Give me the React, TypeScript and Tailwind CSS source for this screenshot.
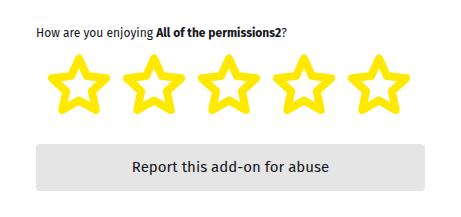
import React from "react";

function Star() {
  const cx = 32;
  const cy = 34;
  const R = 28.5;
  const r = 13.5;
  const pts: string[] = [];
  for (let i = 0; i < 10; i++) {
    const a = ((-90 + i * 36) * Math.PI) / 180;
    const rad = i % 2 === 0 ? R : r;
    pts.push(`${(cx + rad * Math.cos(a)).toFixed(2)},${(cy + rad * Math.sin(a)).toFixed(2)}`);
  }
  return (
    <svg width="64" height="64" viewBox="0 0 64 64" className="shrink-0">
      <polygon
        points={pts.join(" ")}
        fill="none"
        stroke="#ffe900"
        strokeWidth="8"
        strokeLinejoin="round"
      />
    </svg>
  );
}

export default function App() {
  return (
    <div className="w-[461px] h-[217px] bg-white pl-9 pt-[25px] text-[#15141a]" style={{ fontFamily: '"Fira Sans", "Open Sans", "Noto Sans", sans-serif' }}>
      <p className="text-[12px] leading-4">
        How are you enjoying <span className="font-bold">All of the permissions2</span>?
      </p>
      <div className="flex gap-[11px] mt-[12px] ml-[11px]">
        {[0, 1, 2, 3, 4].map((i) => (
          <Star key={i} />
        ))}
      </div>
      <button className="mt-[27px] w-[389px] h-[47px] rounded bg-[#e5e5e5] text-[15px] text-[#15141a] flex items-center justify-center">
        Report this add-on for abuse
      </button>
    </div>
  );
}
